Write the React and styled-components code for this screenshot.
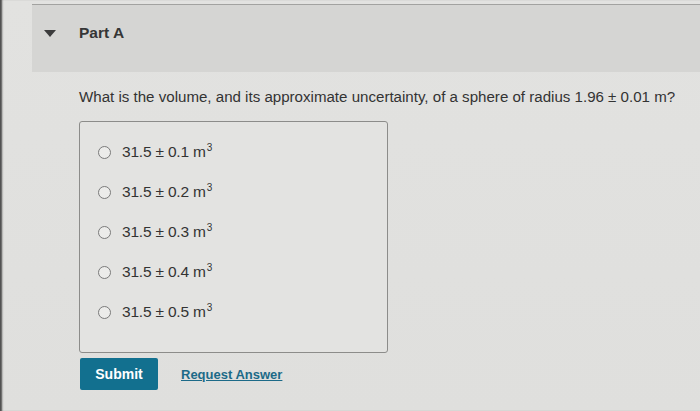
import React from "react";
import styled, { createGlobalStyle } from "styled-components";

const GlobalStyle = createGlobalStyle`
  html, body {
    margin: 0;
    padding: 0;
    background: #e0e0de;
  }
  body {
    font-family: "Liberation Sans", Arial, sans-serif;
    color: #333333;
  }
`;

const Page = styled.div`
  width: 700px;
  height: 411px;
  overflow: hidden;
  box-sizing: border-box;
  padding-top: 4px;
  background: linear-gradient(180deg, #e2e2e0 0%, #dfdfdd 100%);
  box-shadow: inset 3px 0 2px -1px #4a4a4a;
`;

const Header = styled.div`
  margin-left: 32px;
  height: 68px;
  box-sizing: border-box;
  border-top: 1px solid #a2a2a0;
  background: #d5d5d3;
  display: flex;
  align-items: center;
  padding-left: 12px;
  padding-bottom: 11px;
`;

const Caret = styled.span`
  width: 0;
  height: 0;
  border-left: 6px solid transparent;
  border-right: 6px solid transparent;
  border-top: 7px solid #3c3c3c;
  margin-right: 23px;
`;

const PartTitle = styled.h2`
  margin: 0;
  font-size: 15.5px;
  font-weight: 700;
  color: #363636;
`;

const Content = styled.div`
  padding-left: 79px;
`;

const Question = styled.p`
  margin: 16px 0 15px;
  font-size: 15.1px;
  line-height: 18px;
  color: #333333;
`;

const ChoiceBox = styled.div`
  width: 309px;
  box-sizing: border-box;
  border: 1px solid #8c8c8a;
  border-radius: 3px;
  background: #e3e3e1;
  padding: 20px 0 30px 18px;
  display: flex;
  flex-direction: column;
  gap: 20px;
`;

const Choice = styled.label`
  display: flex;
  align-items: center;
  height: 20px;
  font-size: 15.5px;
  color: #333333;
  letter-spacing: -0.2px;
`;

const ChoiceText = styled.span`
  line-height: 20px;
`;

const Radio = styled.span`
  width: 13px;
  height: 13px;
  box-sizing: border-box;
  border-radius: 50%;
  border: 1.5px solid #7a7a7a;
  background: #ececea;
  margin-right: 11px;
  flex-shrink: 0;
`;

const Sup = styled.sup`
  font-size: 10px;
  line-height: 0;
  vertical-align: 6px;
  margin-left: 1px;
`;

const Actions = styled.div`
  display: flex;
  align-items: center;
  margin-top: 5px;
  margin-left: 1px;
`;

const SubmitButton = styled.button`
  width: 78px;
  height: 32px;
  border: none;
  border-radius: 2px;
  background: #12708f;
  color: #ffffff;
  font-family: "Liberation Sans", Arial, sans-serif;
  font-size: 14px;
  font-weight: 700;
  padding: 0;
`;

const RequestLink = styled.a`
  margin-left: 23px;
  font-size: 13px;
  font-weight: 700;
  color: #1c6a88;
  text-decoration: underline;
`;

const choices = ["0.1", "0.2", "0.3", "0.4", "0.5"];

export default function App() {
  return (
    <>
      <GlobalStyle />
      <Page>
        <Header>
          <Caret />
          <PartTitle>Part A</PartTitle>
        </Header>
        <Content>
          <Question>
            What is the volume, and its approximate uncertainty, of a sphere of radius 1.96 ± 0.01 m?
          </Question>
          <ChoiceBox>
            {choices.map((c) => (
              <Choice key={c}>
                <Radio />
                <ChoiceText>
                  31.5 ± {c} m<Sup>3</Sup>
                </ChoiceText>
              </Choice>
            ))}
          </ChoiceBox>
          <Actions>
            <SubmitButton>Submit</SubmitButton>
            <RequestLink href="#">Request Answer</RequestLink>
          </Actions>
        </Content>
      </Page>
    </>
  );
}
